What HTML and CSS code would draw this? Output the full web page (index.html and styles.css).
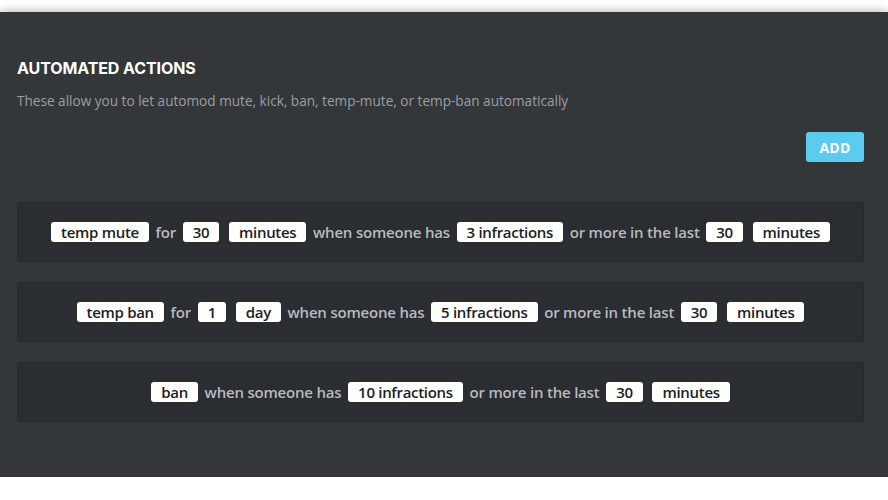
FILE: index.html
```html
<!DOCTYPE html>
<html>
<head>
<meta charset="utf-8">
<link rel="stylesheet" href="styles.css">
</head>
<body>
<div class="panel">
  <h2 class="title">AUTOMATED ACTIONS</h2>
  <p class="subtitle">These allow you to let automod mute, kick, ban, temp-mute, or temp-ban automatically</p>
  <div class="toolbar"><button class="add">ADD</button></div>
  <div class="rules">
    <div class="rule"><p class="line"><span class="pill">temp mute</span> for <span class="pill">30</span> <span class="pill">minutes</span> when someone has <span class="pill">3 infractions</span> or more in the last <span class="pill">30</span> <span class="pill">minutes</span></p></div>
    <div class="rule"><p class="line"><span class="pill">temp ban</span> for <span class="pill">1</span> <span class="pill">day</span> when someone has <span class="pill">5 infractions</span> or more in the last <span class="pill">30</span> <span class="pill">minutes</span></p></div>
    <div class="rule"><p class="line"><span class="pill">ban</span> when someone has <span class="pill">10 infractions</span> or more in the last <span class="pill">30</span> <span class="pill">minutes</span></p></div>
  </div>
</div>
</body>
</html>
```
FILE: styles.css
```css
html, body {
  margin: 0;
  padding: 0;
  background: #ffffff;
  font-family: "Open Sans", "Noto Sans", sans-serif;
}
.panel {
  margin-top: 12px;
  background: #33373a;
  padding: 44px 24px 55px 17px;
  box-shadow: 0 0 10px rgba(0, 0, 0, 0.35);
}
.title {
  margin: 0;
  font-family: "Inter", "Noto Sans", sans-serif;
  font-weight: 700;
  font-size: 16px;
  line-height: 24px;
  color: #ffffff;
  letter-spacing: -0.1px;
}
.subtitle {
  margin: 11px 0 0;
  font-size: 13.6px;
  line-height: 20px;
  color: #9b9ea1;
}
.toolbar {
  display: flex;
  justify-content: flex-end;
  margin-top: 21px;
}
.add {
  width: 58px;
  height: 30px;
  border: none;
  border-radius: 3px;
  background: #5ccbf0;
  color: #ffffff;
  font-family: "Open Sans", sans-serif;
  font-weight: 700;
  font-size: 14px;
  letter-spacing: 0.2px;
  padding: 0;
}
.rules {
  margin-top: 40px;
  display: flex;
  flex-direction: column;
  gap: 20px;
}
.rule {
  box-sizing: border-box;
  height: 60px;
  background: #2a2d31;
  border: 1px solid #26292c;
  border-radius: 3px;
  display: flex;
  align-items: center;
  justify-content: center;
}
.line {
  margin: 0;
  font-size: 15px;
  font-weight: 600;
  letter-spacing: -0.2px;
  color: #b8babd;
  line-height: 20px;
}
.pill {
  display: inline-block;
  background: #ffffff;
  color: #1b1e21;
  border-radius: 3px;
  padding: 0 10px;
  margin: 0 3px;
  letter-spacing: -0.3px;
  line-height: 20px;
  height: 20px;
}
```
